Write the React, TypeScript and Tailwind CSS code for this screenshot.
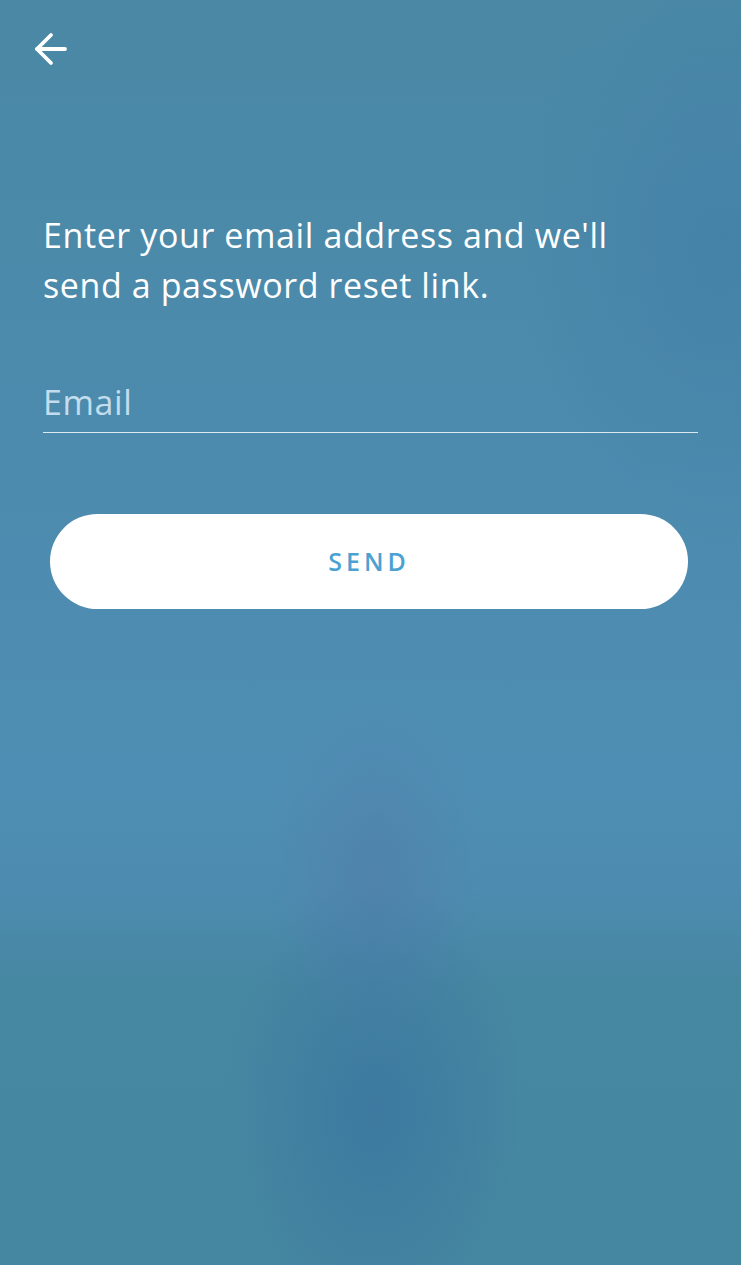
import { ArrowLeft } from "lucide-react";

export default function App() {
  return (
    <div
      className="relative flex h-[1265px] w-full flex-col overflow-hidden bg-[image:radial-gradient(ellipse_150px_230px_at_375px_1110px,#3d79a0_0%,rgba(61,121,160,0)_100%),radial-gradient(ellipse_110px_180px_at_375px_880px,rgba(80,130,172,0.9)_0%,rgba(80,130,172,0)_100%),radial-gradient(ellipse_200px_300px_at_720px_250px,rgba(68,128,168,0.8)_0%,rgba(68,128,168,0)_100%),linear-gradient(180deg,#4a88a5_0%,#4c8bad_35%,#4f8eb4_62%,#4d8cb0_70%,#4687a1_78%,#4587a0_100%)] font-['Open_Sans','Noto_Sans',sans-serif]"
    >
      <header className="pl-[27px] pt-[25px]">
        <button className="block text-white">
          <ArrowLeft size={48} strokeWidth={1.9} />
        </button>
      </header>

      <main className="flex flex-col px-[43px] pt-[137px]">
        <p className="text-[34px] leading-[50px] tracking-[0.6px] text-white">
          Enter your email address and we'll
          <br />
          send a password reset link.
        </p>

        <div className="mt-[62px] border-b-[1.5px] border-[#dbe9f1]">
          <input
            type="email"
            placeholder="Email"
            className="block h-[60px] w-full bg-transparent text-[34px] tracking-[0.6px] text-white outline-none placeholder:text-[#c3dded]"
          />
        </div>

        <button className="mt-[81px] ml-[7px] mr-[10px] flex h-[95px] items-center justify-center rounded-full bg-white">
          <span className="text-[25px] font-semibold tracking-[4px] text-[#4ba2d2]">SEND</span>
        </button>
      </main>
    </div>
  );
}
